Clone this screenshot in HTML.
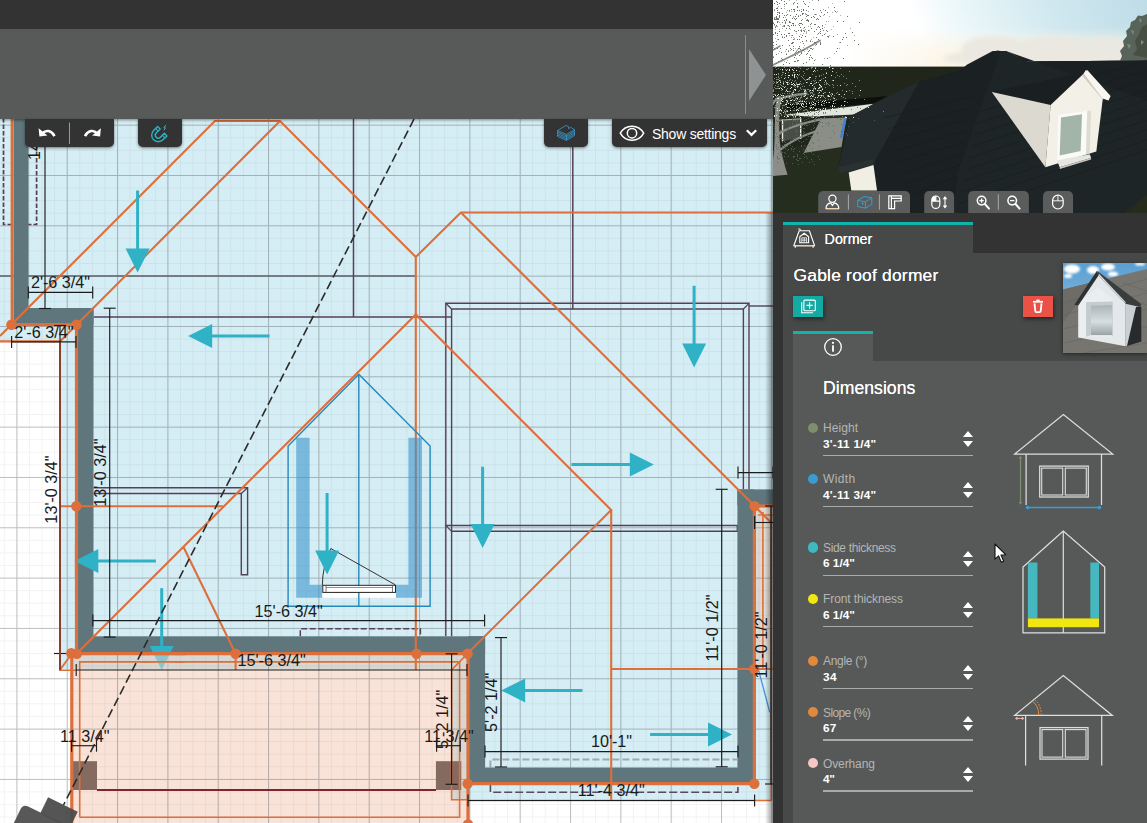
<!DOCTYPE html>
<html lang="en"><head><meta charset="utf-8"><title>Dormer editor</title>
<style>
*{box-sizing:border-box;margin:0;padding:0}
html,body{width:1147px;height:823px;overflow:hidden;background:#fff;
 font-family:"Liberation Sans",sans-serif;}
#app{position:relative;width:1147px;height:823px;overflow:hidden;background:#fff}
#plan{position:absolute;left:0;top:0;width:773px;height:823px}
#topdark{position:absolute;left:0;top:0;width:773px;height:29px;background:#333333}
#topgrey{position:absolute;left:0;top:28.6px;width:773px;height:90px;background:#585a59;
 box-shadow:0 1px 3px rgba(0,0,0,.45)}
#topgrey .vline{position:absolute;left:745px;top:6px;width:1.4px;height:79px;background:#8a8c8b}
#topgrey .tri{position:absolute;left:748.5px;top:20px;width:0;height:0;border-left:17.5px solid #8f9293;
 border-top:26.2px solid transparent;border-bottom:26.2px solid transparent}
.tbtn{position:absolute;top:118.6px;height:28px;background:#333333;border-radius:0 0 5px 5px;
 box-shadow:0 1px 3px rgba(0,0,0,.5)}
.tbtn svg{position:absolute;left:0;top:0}
#showset{color:#fff;font-size:14px;letter-spacing:-0.25px}
#showset span{position:absolute;left:40px;top:7.2px;white-space:nowrap;font-weight:400}
#view{position:absolute;left:773px;top:0;width:374px;height:213px;overflow:hidden}
#edge{position:absolute;left:765px;top:213px;width:8px;height:610px;
 background:linear-gradient(to right,rgba(0,0,0,0),rgba(0,0,0,.42))}
#edge2{position:absolute;left:769px;top:118px;width:4px;height:95px;
 background:linear-gradient(to right,rgba(0,0,0,0),rgba(0,0,0,.25))}

#panel{position:absolute;left:773px;top:213px;width:374px;height:610px;background:#333333;color:#fff}
#ptab{position:absolute;left:10px;top:9.2px;width:190px;height:31px;background:#474948;border-top:3.6px solid #10b4ad}
#ptab svg{position:absolute;left:9px;top:2.5px}
#ptab span{position:absolute;left:41.6px;top:6.2px;font-size:14.3px;white-space:nowrap;text-shadow:0 0 .5px #fff}
#pbody{position:absolute;left:10px;top:39.6px;width:364px;height:571px;background:#474948}
#ptitle{position:absolute;left:10.500px;top:12.200px;font-size:17.4px;letter-spacing:0.23px;white-space:nowrap;text-shadow:0 0 .5px #fff}
.sbtn{position:absolute;top:43px;width:30px;height:21px;box-shadow:1px 2px 4px rgba(0,0,0,.5)}
.sbtn svg{position:absolute;left:0;top:0}
#thumb{position:absolute;left:280px;top:10.3px;width:84px;height:90px;box-shadow:0 1px 4px rgba(0,0,0,.5);overflow:hidden}
#itab{position:absolute;left:10px;top:78.3px;width:80px;height:31px;background:#575958;border-top:3.2px solid #10b4ad}
#itab svg{position:absolute;left:30px;top:3.5px}
#ibody{position:absolute;left:10px;top:108.4px;width:354px;height:464px;background:#575958}
#ibody h3{position:absolute;left:30px;top:16.800px;font-size:17.6px;font-weight:400;letter-spacing:0.04px;white-space:nowrap;text-shadow:0 0 .5px #fff}
.fld{position:absolute;left:0;width:190px;height:40px}
.fld i{position:absolute;left:14.800px;top:7.500px;width:10.400px;height:10.400px;border-radius:50%}
.fld label{position:absolute;left:30px;top:6px;font-size:12px;color:#b4b5b4;white-space:nowrap;letter-spacing:0.05px}
.fld b{position:absolute;left:30px;top:21.5px;font-size:11.8px;font-weight:700;color:#fff;white-space:nowrap;letter-spacing:-0.1px}
.fld u{position:absolute;left:30px;top:39.800px;width:150px;height:1.2px;background:#a9abaa}
.fld s{position:absolute;left:169.500px;width:0;height:0;border-left:5.400px solid transparent;border-right:5.400px solid transparent}
.fld s.up{top:16.100px;border-bottom:6.500px solid #fff}
.fld s.dn{top:25.800px;border-top:6.500px solid #fff}
#diag{position:absolute;left:200px;top:30px}
#cursor{position:absolute;left:994px;top:543px}
</style></head><body><div id="app">
<div id="plan"><svg width="773" height="823" viewBox="0 0 773 823" style="display:block">
<defs>
<pattern id="gmin" x="16.4" y="24" width="12.58" height="12.58" patternUnits="userSpaceOnUse">
<path d="M0.5 0 V12.58 M0 0.5 H12.58" stroke="rgba(70,80,80,0.065)" stroke-width="1" fill="none"/></pattern>
<pattern id="gmaj" x="16.4" y="24" width="50.33" height="50.33" patternUnits="userSpaceOnUse">
<path d="M0.5 0 V50.33 M0 0.5 H50.33" stroke="rgba(60,66,70,0.30)" stroke-width="1.1" fill="none"/></pattern>
</defs>
<rect x="0" y="0" width="773" height="823" fill="#ffffff" />
<rect x="0" y="110" width="773" height="713" fill="#d5edf4" />
<polygon points="0,341.5 60,341.5 60,670.3 70.5,670.3 70.5,823 0,823" fill="#ffffff" />
<rect x="468" y="800.5" width="305" height="23" fill="#ffffff" />
<rect x="70.5" y="654" width="397.5" height="169" fill="#f9e2d7" />
<rect x="756" y="506" width="17" height="163" fill="#dcd9d2" />
<rect x="73.4" y="655" width="394.6" height="15" fill="#d9d7d1" />
<rect x="451.6" y="655" width="16.4" height="145" fill="#d9d7d1" />
<rect x="60" y="325" width="16" height="17" fill="#d5edf4" />
<rect x="0" y="110" width="773" height="713" fill="url(#gmin)" />
<rect x="0" y="110" width="773" height="713" fill="url(#gmaj)" />
<line x1="0" y1="276" x2="416" y2="276" stroke="#5d6168" stroke-width="1.3" />
<line x1="93.5" y1="317" x2="451.6" y2="317" stroke="#563f57" stroke-width="1.5" />
<line x1="353.5" y1="118" x2="353.5" y2="317" stroke="#563f57" stroke-width="1.5" />
<line x1="572.8" y1="118" x2="572.8" y2="309" stroke="#563f57" stroke-width="1.5" />
<polyline points="445.8,636.3 445.8,303.3 749,303.3 749,489.3" fill="none" stroke="#563f57" stroke-width="1.4" />
<polyline points="451.6,636.3 451.6,309 743.4,309 743.4,489.3" fill="none" stroke="#563f57" stroke-width="1.4" />
<line x1="445.8" y1="303.3" x2="451.6" y2="309" stroke="#563f57" stroke-width="1.2" />
<line x1="749" y1="303.3" x2="743.4" y2="309" stroke="#563f57" stroke-width="1.2" />
<line x1="749" y1="306" x2="773" y2="306" stroke="#563f57" stroke-width="1.4" />
<polyline points="445.8,525.5 737.3,525.5 737.3,531.3 451.6,531.3" fill="none" stroke="#563f57" stroke-width="1.4" />
<line x1="445.8" y1="525.5" x2="451.6" y2="531.3" stroke="#563f57" stroke-width="1.2" />
<polyline points="93.5,487.7 247.6,487.7 247.6,574.8 241.3,574.8 241.3,493.5 93.5,493.5" fill="none" stroke="#563f57" stroke-width="1.4" />
<line x1="241.3" y1="493.5" x2="247.6" y2="487.7" stroke="#563f57" stroke-width="1.2" />
<polyline points="3.5,118 3.5,224.5 36.6,224.5 36.6,118" fill="none" stroke="#563f57" stroke-width="1.7" stroke-dasharray="4.5 2"/>
<polyline points="300.3,636.3 300.3,628.7 420.4,628.7 420.4,636.3" fill="none" stroke="#563f57" stroke-width="1.5" stroke-dasharray="6 2.500"/>
<polyline points="490.4,784 490.4,792.2 737.9,792.2 737.9,784" fill="none" stroke="#5b4a60" stroke-width="1.6" stroke-dasharray="8 3"/>
<polyline points="490.4,767.5 490.4,759.5 737,759.5" fill="none" stroke="#a3a9ab" stroke-width="2" stroke-dasharray="7 3"/>
<rect x="14" y="110" width="14.6" height="214" fill="#5f767d" />
<rect x="14" y="308" width="79.5" height="16.5" fill="#5f767d" />
<rect x="77.6" y="308" width="15.9" height="345" fill="#5f767d" />
<rect x="77.6" y="636.3" width="407.5" height="16.2" fill="#5f767d" />
<rect x="468.2" y="636.3" width="16.9" height="147" fill="#5f767d" />
<rect x="468.2" y="767.5" width="285.7" height="15.8" fill="#5f767d" />
<rect x="737.4" y="489.4" width="16.5" height="294" fill="#5f767d" />
<rect x="737.4" y="489.4" width="36" height="16.2" fill="#5f767d" />
<rect x="72.7" y="761.2" width="24.3" height="28.8" fill="#846a5f" />
<rect x="435.9" y="761.2" width="25.4" height="28.8" fill="#846a5f" />
<line x1="97" y1="790" x2="436" y2="790" stroke="#7b2631" stroke-width="2.2" />
<polyline points="79.7,817.3 79.7,661.9 459.6,661.9 459.6,817.3 79.7,817.3" fill="none" stroke="#dc6f3b" stroke-width="1.6" />
<polyline points="467.5,653.6 451.6,670 451.6,799.7 468,799.7" fill="none" stroke="#dc6f3b" stroke-width="1.6" />
<line x1="71.8" y1="653" x2="71.8" y2="823" stroke="#dc6f3b" stroke-width="3.2" />
<line x1="468" y1="653" x2="468" y2="823" stroke="#dc6f3b" stroke-width="3.2" />
<line x1="12.2" y1="110" x2="12.2" y2="325" stroke="#dc6f3b" stroke-width="3.2" />
<line x1="11" y1="324.7" x2="77" y2="324.7" stroke="#dc6f3b" stroke-width="3.2" />
<line x1="76.5" y1="324" x2="76.5" y2="654" stroke="#dc6f3b" stroke-width="3.2" />
<line x1="73" y1="653.6" x2="468" y2="653.6" stroke="#dc6f3b" stroke-width="3.2" />
<line x1="468" y1="783.7" x2="754" y2="783.7" stroke="#dc6f3b" stroke-width="3.2" />
<line x1="754.4" y1="506" x2="754.4" y2="784" stroke="#dc6f3b" stroke-width="3.2" />
<line x1="754" y1="506" x2="773" y2="506" stroke="#dc6f3b" stroke-width="3.2" />
<polyline points="0,336 11.2,324.8 214.9,121 280,121 415.8,257" fill="none" stroke="#dc6f3b" stroke-width="2.1" />
<polyline points="280,121 76.6,324.8 60,341.4 0,341.4" fill="none" stroke="#dc6f3b" stroke-width="2.1" />
<polyline points="415.8,653 415.8,257 460.9,212.5 773,212.5" fill="none" stroke="#dc6f3b" stroke-width="2.1" />
<line x1="460.9" y1="212.5" x2="754.6" y2="506.1" stroke="#dc6f3b" stroke-width="2.1" />
<line x1="754.6" y1="506.1" x2="772" y2="523.5" stroke="#dc6f3b" stroke-width="2.1" />
<polyline points="77,653.3 415.8,314.5 611.2,510 467.5,653.6" fill="none" stroke="#dc6f3b" stroke-width="2.1" />
<line x1="60" y1="506.2" x2="222.9" y2="506.2" stroke="#dc6f3b" stroke-width="2.1" />
<line x1="183.6" y1="547.3" x2="235.6" y2="653.8" stroke="#dc6f3b" stroke-width="2.1" />
<line x1="235.6" y1="653.8" x2="235.6" y2="670" stroke="#dc6f3b" stroke-width="2.1" />
<line x1="415.8" y1="653.8" x2="415.8" y2="670" stroke="#dc6f3b" stroke-width="2.1" />
<line x1="611.2" y1="510" x2="611.2" y2="800.5" stroke="#dc6f3b" stroke-width="2.1" />
<line x1="611.2" y1="669" x2="773" y2="669" stroke="#dc6f3b" stroke-width="2.1" />
<line x1="468" y1="800.5" x2="771" y2="800.5" stroke="#dc6f3b" stroke-width="1.5" />
<line x1="762.9" y1="512" x2="762.9" y2="669" stroke="#dc6f3b" stroke-width="1.6" />
<line x1="771.3" y1="506" x2="771.3" y2="800.5" stroke="#dc6f3b" stroke-width="1.6" />
<line x1="758" y1="515" x2="773" y2="515" stroke="#dc6f3b" stroke-width="1.4" />
<line x1="60" y1="341.4" x2="60" y2="670" stroke="#8a4028" stroke-width="2" />
<line x1="59.4" y1="670.6" x2="72" y2="653.5" stroke="#dc6f3b" stroke-width="1.8" />
<line x1="59.4" y1="670.3" x2="77" y2="670.3" stroke="#dc6f3b" stroke-width="1.4" />
<line x1="758.8" y1="670.8" x2="769.8" y2="712.3" stroke="#4a90d9" stroke-width="1.3" />
<path d="M296.200 437.800 H309.600 V584.800 H322.300 V597.700 H296.200 Z M422 437.800 H408.400 V584.800 H396 V597.700 H422 Z" fill="rgba(60,150,205,0.60)"/>
<rect x="322.3" y="584.8" width="73.7" height="12.9" fill="#ffffff" />
<polyline points="288.1,606.3 288.1,446 358.8,374.3 430.1,446 430.1,606.3 288.1,606.3" fill="none" stroke="#2389bd" stroke-width="1.4" />
<line x1="358.8" y1="374.3" x2="358.8" y2="606.3" stroke="#2389bd" stroke-width="1.4" />
<rect x="322.800" y="585.300" width="72.700" height="7.100" fill="#fff" stroke="#222" stroke-width="1"/>
<line x1="326" y1="587.5" x2="392.5" y2="587.5" stroke="#777" stroke-width="0.8" />
<line x1="326" y1="585.3" x2="326" y2="592.4" stroke="#555" stroke-width="0.8" />
<line x1="392.5" y1="585.3" x2="392.5" y2="592.4" stroke="#555" stroke-width="0.8" />
<path d="M395.300 584.800 L330.800 548.500 Q322.500 566 322.300 585.300" fill="none" stroke="#333" stroke-width="1"/>
<line x1="137.6" y1="190.5" x2="137.6" y2="249.6" stroke="#2fb2c6" stroke-width="3" /><polygon points="137.6,272.6 125.6,248.6 149.6,248.6" fill="#2fb2c6" />
<line x1="269.6" y1="336.1" x2="211.2" y2="336.1" stroke="#2fb2c6" stroke-width="3" /><polygon points="188.2,336.1 212.2,324.1 212.2,348.1" fill="#2fb2c6" />
<line x1="694.1" y1="285.8" x2="694.1" y2="344.6" stroke="#2fb2c6" stroke-width="3" /><polygon points="694.1,367.6 682.1,343.6 706.1,343.6" fill="#2fb2c6" />
<line x1="571.5" y1="464.4" x2="630.8" y2="464.4" stroke="#2fb2c6" stroke-width="3" /><polygon points="653.8,464.4 629.8,476.4 629.8,452.4" fill="#2fb2c6" />
<line x1="482.6" y1="466.7" x2="482.6" y2="525" stroke="#2fb2c6" stroke-width="3" /><polygon points="482.6,548 470.6,524 494.6,524" fill="#2fb2c6" />
<line x1="327.1" y1="493" x2="327.1" y2="551.4" stroke="#2fb2c6" stroke-width="3" /><polygon points="327.1,574.4 315.1,550.4 339.1,550.4" fill="#2fb2c6" />
<line x1="155.9" y1="561" x2="97.3" y2="561" stroke="#2fb2c6" stroke-width="3" /><polygon points="74.3,561 98.3,549 98.3,573" fill="#2fb2c6" />
<line x1="76.5" y1="545" x2="76.5" y2="577" stroke="#dc6f3b" stroke-width="3.2" />
<line x1="161.7" y1="588.2" x2="161.7" y2="647" stroke="#2fb2c6" stroke-width="3" /><polygon points="161.7,670 149.7,646 173.7,646" fill="#2fb2c6" />
<line x1="582.5" y1="690.4" x2="524.2" y2="690.4" stroke="#2fb2c6" stroke-width="3" /><polygon points="501.2,690.4 525.2,678.4 525.2,702.4" fill="#2fb2c6" />
<line x1="650.1" y1="734.4" x2="709" y2="734.4" stroke="#2fb2c6" stroke-width="3" /><polygon points="732,734.4 708,746.4 708,722.4" fill="#2fb2c6" />
<rect x="149" y="655.2" width="26" height="14.8" fill="rgba(217,215,209,0.55)" />
<line x1="140" y1="653.6" x2="185" y2="653.6" stroke="#dc6f3b" stroke-width="3.2" />
<line x1="140" y1="661.9" x2="185" y2="661.9" stroke="#dc6f3b" stroke-width="1.6" />
<circle cx="11.4" cy="324.8" r="5.2" fill="#dc6f3b"/>
<circle cx="76.6" cy="324.8" r="5.2" fill="#dc6f3b"/>
<circle cx="76.3" cy="506.2" r="5.2" fill="#dc6f3b"/>
<circle cx="71.3" cy="653.3" r="5.2" fill="#dc6f3b"/>
<circle cx="76.8" cy="653.9" r="5.2" fill="#dc6f3b"/>
<circle cx="235.6" cy="653.7" r="5.2" fill="#dc6f3b"/>
<circle cx="416.5" cy="653.7" r="5.2" fill="#dc6f3b"/>
<circle cx="467.6" cy="653.7" r="5.2" fill="#dc6f3b"/>
<circle cx="467.6" cy="783.8" r="5.2" fill="#dc6f3b"/>
<circle cx="754.3" cy="783.8" r="5.2" fill="#dc6f3b"/>
<circle cx="754.3" cy="669" r="5.2" fill="#dc6f3b"/>
<circle cx="754.6" cy="506.1" r="5.2" fill="#dc6f3b"/>
<circle cx="468" cy="824.5" r="5.2" fill="#dc6f3b"/>
<line x1="45" y1="60" x2="45" y2="308.5" stroke="#1c1c1c" stroke-width="1.15" /><line x1="39" y1="60" x2="51" y2="60" stroke="#1c1c1c" stroke-width="1.15" /><line x1="39" y1="308.5" x2="51" y2="308.5" stroke="#1c1c1c" stroke-width="1.15" />
<text transform="translate(40 160) rotate(-90)" font-size="16" fill="#1a1a1a" font-family="Liberation Sans, sans-serif">14'-4 1/2"</text>
<line x1="28.3" y1="292.4" x2="92.7" y2="292.4" stroke="#1c1c1c" stroke-width="1.15" /><line x1="28.3" y1="286.4" x2="28.3" y2="298.4" stroke="#1c1c1c" stroke-width="1.15" /><line x1="92.7" y1="286.4" x2="92.7" y2="298.4" stroke="#1c1c1c" stroke-width="1.15" /><text x="60.5" y="287.9" font-size="16.2" text-anchor="middle" fill="#1a1a1a" font-family="Liberation Sans, sans-serif">2'-6 3/4"</text>
<line x1="11.6" y1="341.9" x2="76" y2="341.9" stroke="#1c1c1c" stroke-width="1.15" /><line x1="11.6" y1="335.9" x2="11.6" y2="347.9" stroke="#1c1c1c" stroke-width="1.15" /><line x1="76" y1="335.9" x2="76" y2="347.9" stroke="#1c1c1c" stroke-width="1.15" /><text x="43.8" y="338" font-size="16.2" text-anchor="middle" fill="#1a1a1a" font-family="Liberation Sans, sans-serif">2'-6 3/4"</text>
<line x1="109.7" y1="308.2" x2="109.7" y2="637.1" stroke="#1c1c1c" stroke-width="1.15" /><line x1="103.7" y1="308.2" x2="115.7" y2="308.2" stroke="#1c1c1c" stroke-width="1.15" /><line x1="103.7" y1="637.1" x2="115.7" y2="637.1" stroke="#1c1c1c" stroke-width="1.15" /><text transform="translate(106 472.65) rotate(-90)" font-size="16.2" text-anchor="middle" fill="#1a1a1a" font-family="Liberation Sans, sans-serif">13'-0 3/4"</text>
<line x1="60" y1="325.5" x2="60" y2="653.5" stroke="#1c1c1c" stroke-width="1.15" /><line x1="54" y1="325.5" x2="66" y2="325.5" stroke="#1c1c1c" stroke-width="1.15" /><line x1="54" y1="653.5" x2="66" y2="653.5" stroke="#1c1c1c" stroke-width="1.15" /><text transform="translate(56.5 489.5) rotate(-90)" font-size="16.2" text-anchor="middle" fill="#1a1a1a" font-family="Liberation Sans, sans-serif">13'-0 3/4"</text>
<line x1="60" y1="342.5" x2="60" y2="670" stroke="#8a4028" stroke-width="2" />
<line x1="92.8" y1="620.6" x2="484.6" y2="620.6" stroke="#1c1c1c" stroke-width="1.15" /><line x1="92.8" y1="614.6" x2="92.8" y2="626.6" stroke="#1c1c1c" stroke-width="1.15" /><line x1="484.6" y1="614.6" x2="484.6" y2="626.6" stroke="#1c1c1c" stroke-width="1.15" /><text x="288.7" y="616.7" font-size="16.2" text-anchor="middle" fill="#1a1a1a" font-family="Liberation Sans, sans-serif">15'-6 3/4"</text>
<line x1="76.2" y1="670" x2="467" y2="670" stroke="#1c1c1c" stroke-width="1.15" /><line x1="76.2" y1="664" x2="76.2" y2="676" stroke="#1c1c1c" stroke-width="1.15" /><line x1="467" y1="664" x2="467" y2="676" stroke="#1c1c1c" stroke-width="1.15" /><text x="271.6" y="665.5" font-size="16.2" text-anchor="middle" fill="#1a1a1a" font-family="Liberation Sans, sans-serif">15'-6 3/4"</text>
<line x1="71.6" y1="745.7" x2="96.5" y2="745.7" stroke="#1c1c1c" stroke-width="1.15" /><line x1="71.6" y1="739.7" x2="71.6" y2="751.7" stroke="#1c1c1c" stroke-width="1.15" /><line x1="96.5" y1="739.7" x2="96.5" y2="751.7" stroke="#1c1c1c" stroke-width="1.15" /><text x="84.8" y="741.7" font-size="16.2" text-anchor="middle" fill="#1a1a1a" font-family="Liberation Sans, sans-serif">11 3/4"</text>
<line x1="436.6" y1="745.7" x2="460.2" y2="745.7" stroke="#1c1c1c" stroke-width="1.15" /><line x1="436.6" y1="739.7" x2="436.6" y2="751.7" stroke="#1c1c1c" stroke-width="1.15" /><line x1="460.2" y1="739.7" x2="460.2" y2="751.7" stroke="#1c1c1c" stroke-width="1.15" /><text x="449" y="741.7" font-size="16.2" text-anchor="middle" fill="#1a1a1a" font-family="Liberation Sans, sans-serif">11 3/4"</text>
<line x1="451.6" y1="653.8" x2="451.6" y2="784.3" stroke="#1c1c1c" stroke-width="1.15" /><line x1="445.6" y1="653.8" x2="457.6" y2="653.8" stroke="#1c1c1c" stroke-width="1.15" /><line x1="445.6" y1="784.3" x2="457.6" y2="784.3" stroke="#1c1c1c" stroke-width="1.15" /><text transform="translate(448.3 719.4) rotate(-90)" font-size="16.2" text-anchor="middle" fill="#1a1a1a" font-family="Liberation Sans, sans-serif">5'-2 1/4"</text>
<line x1="501" y1="637.6" x2="501" y2="767" stroke="#1c1c1c" stroke-width="1.15" /><line x1="495" y1="637.6" x2="507" y2="637.6" stroke="#1c1c1c" stroke-width="1.15" /><line x1="495" y1="767" x2="507" y2="767" stroke="#1c1c1c" stroke-width="1.15" /><text transform="translate(497 702.3) rotate(-90)" font-size="16.2" text-anchor="middle" fill="#1a1a1a" font-family="Liberation Sans, sans-serif">5'-2 1/4"</text>
<line x1="485" y1="751.6" x2="738" y2="751.6" stroke="#1c1c1c" stroke-width="1.15" /><line x1="485" y1="745.6" x2="485" y2="757.6" stroke="#1c1c1c" stroke-width="1.15" /><line x1="738" y1="745.6" x2="738" y2="757.6" stroke="#1c1c1c" stroke-width="1.15" /><text x="611.5" y="746.7" font-size="16.2" text-anchor="middle" fill="#1a1a1a" font-family="Liberation Sans, sans-serif">10'-1"</text>
<line x1="468" y1="800.5" x2="754.6" y2="800.5" stroke="#1c1c1c" stroke-width="1.15" /><line x1="468" y1="794.5" x2="468" y2="806.5" stroke="#1c1c1c" stroke-width="1.15" /><line x1="754.6" y1="794.5" x2="754.6" y2="806.5" stroke="#1c1c1c" stroke-width="1.15" /><text x="611.3" y="796.2" font-size="16.2" text-anchor="middle" fill="#1a1a1a" font-family="Liberation Sans, sans-serif">11'-4 3/4"</text>
<line x1="721.7" y1="489.3" x2="721.7" y2="766.8" stroke="#1c1c1c" stroke-width="1.15" /><line x1="715.7" y1="489.3" x2="727.7" y2="489.3" stroke="#1c1c1c" stroke-width="1.15" /><line x1="715.7" y1="766.8" x2="727.7" y2="766.8" stroke="#1c1c1c" stroke-width="1.15" /><text transform="translate(718.3 628.05) rotate(-90)" font-size="16.2" text-anchor="middle" fill="#1a1a1a" font-family="Liberation Sans, sans-serif">11'-0 1/2"</text>
<line x1="771" y1="506" x2="771" y2="784" stroke="#1c1c1c" stroke-width="1.15" /><line x1="765" y1="506" x2="777" y2="506" stroke="#1c1c1c" stroke-width="1.15" /><line x1="765" y1="784" x2="777" y2="784" stroke="#1c1c1c" stroke-width="1.15" /><text transform="translate(767 645) rotate(-90)" font-size="16.2" text-anchor="middle" fill="#1a1a1a" font-family="Liberation Sans, sans-serif">11'-0 1/2"</text>
<line x1="738" y1="472.6" x2="773" y2="472.6" stroke="#1c1c1c" stroke-width="1.15" /><line x1="738" y1="466.6" x2="738" y2="478.6" stroke="#1c1c1c" stroke-width="1.15" /><line x1="773" y1="466.6" x2="773" y2="478.6" stroke="#1c1c1c" stroke-width="1.15" />
<line x1="754.6" y1="522.5" x2="773" y2="522.5" stroke="#1c1c1c" stroke-width="1.1" />
<line x1="754.6" y1="516" x2="754.6" y2="529" stroke="#1c1c1c" stroke-width="1.3" />
<line x1="414" y1="119" x2="63.5" y2="805" stroke="#2b2b2b" stroke-width="1.6" stroke-dasharray="9 4"/>
<g transform="translate(37.600 824.400) rotate(25.900)"><rect x="-22" y="-12" width="66" height="44" rx="5" fill="#4e4e4e" opacity="0.94"/><rect x="-2.400" y="-28.900" width="33" height="18" fill="#4a4a4a" opacity="0.94"/></g>
</svg></div>
<div id="edge"></div><div id="edge2"></div>
<div id="topgrey"><div class="vline"></div><div class="tri"></div></div>
<div id="topdark"></div>
<div class="tbtn" style="left:25px;width:88.5px">
<svg width="89" height="28" viewBox="0 0 89 28">
<line x1="44.5" y1="3.5" x2="44.5" y2="25" stroke="#9a9a9a" stroke-width="1"/>
<g fill="none" stroke="#fff" stroke-width="2.6" stroke-linecap="butt">
<path d="M17.5 14.2 C21 10.6 26.5 11.2 29.5 17.2"/>
<path d="M72 14.2 C68.500 10.6 63 11.2 60 17.2"/>
</g>
<path d="M13.600 9.200 L14.400 17.600 L22.400 16.400 Z" fill="#fff"/>
<path d="M75.900 9.200 L75.100 17.600 L67.100 16.400 Z" fill="#fff"/>
</svg></div>
<div class="tbtn" style="left:138.3px;width:43.5px">
<svg width="44" height="28" viewBox="0 0 44 28">
<g fill="none" stroke="#2bb3c6" stroke-width="1.400" stroke-linejoin="round" stroke-linecap="round">
<g transform="translate(20.300 16.200) rotate(45)">
<path d="M-6.600 -5.600 V0 A6.600 6.600 0 0 0 6.600 0 V-5.600 H3 V0 A3 3 0 0 1 -3 0 V-5.600 Z"/>
<path d="M-6.600 -2.800 H-3 M3 -2.800 H6.600" stroke-width="1.100"/>
</g>
<path d="M27.800 6.200 L25.800 8.800 L27.600 8.800 L26 11" stroke-width="1"/>
</g></svg></div>
<div class="tbtn" style="left:544.2px;width:43.7px">
<svg width="44" height="28" viewBox="0 0 44 28">
<g fill="none" stroke="#3a9fd6" stroke-width="0.75" stroke-linejoin="round">
<path d="M13.500 11.500 L22 6.500 L24.500 7.600 L24.500 9.600 L26.800 8.400 L30.500 10.600 L30.500 16.600 L22.500 21.400 L13.500 17.500 Z"/>
<path d="M13.500 11.500 L22.500 15.400 L30.500 10.600 M22.500 15.400 L22.500 21.400"/>
<path d="M13.500 13 L22.500 16.900 L30.500 12.100 M13.500 14.500 L22.500 18.400 L30.500 13.600 M13.500 16 L22.500 19.900 L30.500 15.100"/>
</g></svg></div>
<div class="tbtn" id="showset" style="left:612px;width:154.8px">
<svg width="155" height="28" viewBox="0 0 155 28">
<g fill="none" stroke="#fff" stroke-width="1.5">
<path d="M8.300 14.200 C13.500 4.800 26.500 4.800 31.700 14.200 C26.500 23.600 13.500 23.600 8.300 14.200 Z"/>
<circle cx="20" cy="14.200" r="4.700"/>
</g>
<path d="M134.800 11.200 L139.500 15.900 L144.200 11.200" fill="none" stroke="#fff" stroke-width="2.200"/>
</svg><span>Show settings</span></div>
<div id="view"><svg width="374" height="213" viewBox="0 0 374 213" style="display:block">
<defs>
<linearGradient id="sky" gradientUnits="userSpaceOnUse" x1="60" y1="90" x2="374" y2="-40"><stop offset="0" stop-color="#ffffff"/><stop offset="0.3" stop-color="#ffffff"/><stop offset="0.45" stop-color="#e9f6f9"/><stop offset="0.7" stop-color="#cfe7ef"/><stop offset="1" stop-color="#bcdae5"/></linearGradient>
<linearGradient id="haze" x1="0" y1="0" x2="0" y2="1"><stop offset="0" stop-color="#fbf6e8" stop-opacity="0"/><stop offset="0.4" stop-color="#fbf6e8" stop-opacity="0"/><stop offset="0.75" stop-color="#fbf6e8" stop-opacity="0.85"/><stop offset="1" stop-color="#fbf5e6" stop-opacity="1"/></linearGradient>
<linearGradient id="roofg" x1="0" y1="0" x2="1" y2="1"><stop offset="0" stop-color="#1b2022"/><stop offset="1" stop-color="#202729"/></linearGradient>
<linearGradient id="wl" x1="0" y1="0" x2="1" y2="0"><stop offset="0" stop-color="#fff" stop-opacity="1"/><stop offset="0.2" stop-color="#fff" stop-opacity="1"/><stop offset="0.45" stop-color="#fff" stop-opacity="0"/></linearGradient>
<filter id="bl"><feGaussianBlur stdDeviation="2.500"/></filter>
<filter id="bl1"><feGaussianBlur stdDeviation="0.600"/></filter>
</defs>
<rect x="0" y="0" width="374" height="70" fill="url(#sky)"/>
<rect x="0" y="0" width="374" height="68" fill="url(#haze)"/>
<g filter="url(#bl)" fill="#eae8e0"><ellipse cx="222" cy="49" rx="34" ry="13"/><ellipse cx="283" cy="50" rx="44" ry="14"/><ellipse cx="335" cy="50" rx="28" ry="13"/><ellipse cx="250" cy="58" rx="80" ry="8"/></g>
<rect x="0" y="0" width="374" height="68" fill="url(#wl)"/>
<rect x="0" y="66.600" width="374" height="147" fill="#20271a"/>
<polygon points="0,150 70,140 110,213 0,213" fill="#252d1e" />
<polygon points="0,100 60,96 75,120 0,150" fill="#232a1c" />
<path d="M14 104.500 L40 102 L73 99.800 L115 96 L115 99.500 L99 103.500 L60 107 L14 109.500 Z" fill="#0c0f0b"/>
<polygon points="10.2,115 99,104 100.5,104.5 87.5,114.3 38,116.6" fill="#e3e5df" />
<polygon points="48.1,118.6 73.6,117.6 68.5,147 30.6,152.9" fill="#8b8d87" />
<polygon points="71.2,118.5 73.8,118.3 69.3,137.8 66.8,138" fill="#3d82d2" />
<polygon points="9.5,120 27.7,119.2 27.7,138 9.5,141.2" fill="#50534e" opacity="0.850"/>
<g stroke="#ecece8" stroke-width="1.400" fill="none"><path d="M9.500 119.400 V141.200 M27.700 118.600 V139"/></g>
<path d="M3 120.500 L27.700 118.800" stroke="#b9bbb5" stroke-width="1" fill="none"/>
<g filter="url(#bl1)"><path d="M374 14 L369 16 L365 15.500 L362 20 L358 22 L357 27 L353 31 L354 36 L350 41 L351 46 L347 51 L349 56 L347 60.500 L374 60.500 Z" fill="#59645a"/><path d="M374 24 L369 27 L366 34 L362 41 L364 49 L360 55 L374 58 Z" fill="#465043"/><path d="M366 18 l3 2 l-2 3 z M358 30 l3 1 l-1 4 z M354 44 l4 1 l-2 4 z M368 40 l3 2 l-3 3 z" fill="#7e8a80"/></g>
<polygon points="374,60.6 254,61.4 232.6,51 219.7,51 193.8,64.7 187,70.5 141,83.6 100.5,104.5 74.4,117.5 65.3,167.1 66.6,173.7 100.5,163.2 104,213 374,213" fill="#1d2325" />
<polygon points="146.3,81.5 114.4,96.3 77.2,116.5 65.5,168.6 66.6,173.5 100.6,165.4 102.7,160.1" fill="#242b2d" />
<polygon points="146.3,81.5 187,70.5 224,50.6 228,51 205.8,112.3 184.6,173 180,213 104,213 100.6,165.4 102.7,160.1" fill="#1b2022" />
<polygon points="228,51 233.2,51 252.8,61.4 374,60.6 374,213 180,213 184.6,173 205.8,112.3" fill="#1e2527" />
<polygon points="233.2,51 252.8,61.4 374,60.6 374,100 300,75" fill="#1b2123" />
<g stroke="#151a1b" stroke-width="0.800" opacity="0.550">
<line x1="206" y1="112" x2="374" y2="60"/>
<line x1="203.4" y1="123.5" x2="374" y2="70"/>
<line x1="200.8" y1="135" x2="374" y2="80"/>
<line x1="198.2" y1="146.5" x2="374" y2="90"/>
<line x1="195.6" y1="158" x2="374" y2="100"/>
<line x1="193" y1="169.5" x2="374" y2="110"/>
<line x1="190.4" y1="181" x2="374" y2="120"/>
<line x1="187.8" y1="192.5" x2="374" y2="130"/>
<line x1="185.2" y1="204" x2="374" y2="140"/>
<line x1="182.6" y1="215.5" x2="374" y2="150"/>
</g>
<g stroke="#141819" stroke-width="0.700" opacity="0.550">
<line x1="110" y1="118" x2="200" y2="96"/>
<line x1="114" y1="129" x2="197.8" y2="107.5"/>
<line x1="118" y1="140" x2="195.6" y2="119"/>
<line x1="122" y1="151" x2="193.4" y2="130.5"/>
<line x1="126" y1="162" x2="191.2" y2="142"/>
<line x1="130" y1="173" x2="189" y2="153.5"/>
<line x1="134" y1="184" x2="186.8" y2="165"/>
<line x1="138" y1="195" x2="184.6" y2="176.5"/>
<line x1="142" y1="206" x2="182.4" y2="188"/>
</g>
<polygon points="351.5,213 374,194.7 374,213" fill="#252c1c" />
<polygon points="65.3,167.1 66.6,173.7 100.5,164.2 100.2,159" fill="#2a3133" />
<polygon points="75.7,172.4 100.5,165 104,190.6 78.3,190.6" fill="#f1efe3" />
<polygon points="218.8,92 312.4,71.9 277.6,105" fill="#1a1f21" />
<polygon points="218.8,92 277.6,105 272.4,167.2" fill="#dcdad0" />
<polygon points="312.4,71.9 277.6,105 272.4,167.2 323.3,151.6 329.9,98" fill="#f3f1e7" />
<polygon points="312.4,70.6 314.5,70.2 337.6,96 335.5,100.5 329.5,98.5 310.8,73.6" fill="#f7f6f0" />
<polygon points="310.8,73.6 329.5,98.5 330.5,100.5 309.5,76" fill="#cfcdc3" />
<polygon points="285.4,115 314.2,111 312.9,154.2 284.1,160" fill="#fafaf7" />
<polygon points="314.2,111 318,110.5 316.8,153 312.9,154.2" fill="#dedccf" />
<polygon points="288,117.6 309,114.2 307.6,151 286.7,155.5" fill="#a3b4a9" />
<polygon points="284.1,160.7 316.8,154.2 318.1,158 286.7,167.2" fill="#e6e6e1" />
<polygon points="286.7,167.2 318.1,158 318.1,159.5 286.9,169" fill="#c9c9c2" />
<path d="M0 176 L14.600 174.800 C10 160 7 148 6.600 138 C6.200 128 6 120 6.500 112 C7 106 8 102 9.500 98 L4 97 C2.500 104 2 112 2 120 C1.800 135 1.500 150 0 160 Z" fill="#8c8d88"/>
<g stroke="#8c8d88" fill="none" stroke-linecap="round"><path d="M5 134 C16 127 30 123 48 119.400" stroke-width="2.400"/><path d="M7 150 C16 142 28 136 43.700 131" stroke-width="2.200"/><path d="M6 99 C14 96 24 94.500 33.500 93.800" stroke-width="2.400"/><path d="M0 104 C2 100 4 98 7 97" stroke-width="2"/><path d="M0 65 C14 58 32 50 47 40.500" stroke-width="1.800"/><path d="M0 50 L7 46" stroke-width="1.500"/><path d="M20 56 L26 48" stroke-width="1"/></g>
<path d="M4 8h1v1h-1zM1 48h1v1h-1zM38 23h1v1h-1zM81 40h1v1h-1zM4 21h1v1h-1zM25 30h1v1h-1zM47 10h1v1h-1zM46 27h1v1h-1zM22 61h1v1h-1zM70 58h1v1h-1zM9 13h1v1h-1zM43 29h1v1h-1zM2 27h1v1h-1zM2 32h1v1h-1zM30 13h1v1h-1zM16 63h1v1h-1zM47 16h1v1h-1zM33 16h1v1h-1zM31 27h1v1h-1zM50 30h1v1h-1zM35 15h1v1h-1zM35 6h1v1h-1zM1 3h1v1h-1zM13 36h1v1h-1zM22 16h1v1h-1zM30 63h1v1h-1zM5 18h1v1h-1zM16 21h1v1h-1zM41 60h1v1h-1zM42 24h1v1h-1zM20 50h1v1h-1zM63 51h1v1h-1zM12 22h1v1h-1zM61 7h1v1h-1zM24 39h1v1h-1zM18 25h1v1h-1zM26 46h1v1h-1zM45 0h1v1h-1zM24 7h1v1h-1zM30 50h1v1h-1zM54 58h1v1h-1zM16 28h1v1h-1zM43 37h1v1h-1zM35 30h1v1h-1zM54 12h1v1h-1zM0 42h1v1h-1zM5 39h1v1h-1zM26 10h1v1h-1zM31 31h1v1h-1zM22 25h1v1h-1zM17 48h1v1h-1zM42 14h1v1h-1zM44 18h1v1h-1zM54 31h1v1h-1zM21 30h1v1h-1zM55 36h1v1h-1zM49 28h1v1h-1zM5 19h1v1h-1zM18 43h1v1h-1zM11 15h1v1h-1zM67 42h1v1h-1zM28 11h1v1h-1zM21 57h1v1h-1zM22 55h1v1h-1zM26 36h1v1h-1zM18 49h1v1h-1zM3 17h1v1h-1zM11 26h1v1h-1zM10 17h1v1h-1zM35 21h1v1h-1zM19 18h1v1h-1zM16 26h1v1h-1zM33 54h1v1h-1zM57 65h1v1h-1zM13 15h1v1h-1zM11 1h1v1h-1zM29 14h1v1h-1zM17 22h1v1h-1zM28 53h1v1h-1zM19 23h1v1h-1zM12 23h1v1h-1zM11 4h1v1h-1zM28 52h1v1h-1zM3 16h1v1h-1zM64 48h1v1h-1zM19 43h1v1h-1zM0 57h1v1h-1zM15 33h1v1h-1zM22 19h1v1h-1zM9 37h1v1h-1zM16 45h1v1h-1zM27 23h1v1h-1zM25 16h1v1h-1zM4 4h1v1h-1zM33 20h1v1h-1zM47 44h1v1h-1zM20 3h1v1h-1zM0 34h1v1h-1zM28 20h1v1h-1zM21 11h1v1h-1zM30 43h1v1h-1zM25 48h1v1h-1zM33 40h1v1h-1zM1 24h1v1h-1zM38 48h1v1h-1zM6 16h1v1h-1zM10 64h1v1h-1zM21 61h1v1h-1zM45 26h1v1h-1zM20 23h1v1h-1zM47 29h1v1h-1zM4 48h1v1h-1zM34 19h1v1h-1zM36 57h1v1h-1zM3 44h1v1h-1zM71 1h1v1h-1zM6 12h1v1h-1zM35 51h1v1h-1zM11 25h1v1h-1zM85 44h1v1h-1zM33 62h1v1h-1zM3 19h1v1h-1zM29 50h1v1h-1zM6 13h1v1h-1zM26 55h1v1h-1zM54 36h1v1h-1zM0 23h1v1h-1zM37 24h1v1h-1zM23 14h1v1h-1zM28 37h1v1h-1zM8 8h1v1h-1zM36 59h1v1h-1zM34 15h1v1h-1zM8 52h1v1h-1zM43 44h1v1h-1zM28 23h1v1h-1zM27 49h1v1h-1zM13 54h1v1h-1zM60 36h1v1h-1zM6 15h1v1h-1zM21 18h1v1h-1zM30 30h1v1h-1zM29 41h1v1h-1zM30 1h1v1h-1zM24 6h1v1h-1zM13 3h1v1h-1zM20 39h1v1h-1zM9 59h1v1h-1zM19 35h1v1h-1zM30 10h1v1h-1zM72 33h1v1h-1zM29 24h1v1h-1zM3 18h1v1h-1zM73 37h1v1h-1zM3 54h1v1h-1zM39 49h1v1h-1zM28 31h1v1h-1zM27 27h1v1h-1zM49 25h1v1h-1zM41 24h1v1h-1zM45 33h1v1h-1zM36 50h1v1h-1zM21 2h1v1h-1zM42 42h1v1h-1zM0 49h1v1h-1zM4 19h1v1h-1zM13 20h1v1h-1zM13 35h1v1h-1zM3 25h1v1h-1zM13 49h1v1h-1zM26 25h1v1h-1zM20 46h1v1h-1zM32 36h1v1h-1zM51 34h1v1h-1zM70 37h1v1h-1zM9 45h1v1h-1zM26 48h1v1h-1zM1 10h1v1h-1zM25 60h1v1h-1zM8 0h1v1h-1zM23 18h1v1h-1zM41 42h1v1h-1zM8 58h1v1h-1zM6 3h1v1h-1zM35 20h1v1h-1zM21 9h1v1h-1zM0 45h1v1h-1zM16 33h1v1h-1zM45 19h1v1h-1zM64 21h1v1h-1zM62 11h1v1h-1zM37 41h1v1h-1zM18 9h1v1h-1zM19 42h1v1h-1zM13 19h1v1h-1zM20 25h1v1h-1zM29 35h1v1h-1zM32 4h1v1h-1zM26 23h1v1h-1zM37 48h1v1h-1zM4 18h1v1h-1zM49 35h1v1h-1zM45 39h1v1h-1zM48 12h1v1h-1zM15 40h1v1h-1zM4 35h1v1h-1zM13 62h1v1h-1zM23 31h1v1h-1zM14 14h1v1h-1zM33 10h1v1h-1zM2 19h1v1h-1zM1 19h1v1h-1zM38 17h1v1h-1zM4 33h1v1h-1zM16 10h1v1h-1zM74 16h1v1h-1zM11 20h1v1h-1zM86 22h1v1h-1zM5 61h1v1h-1zM8 60h1v1h-1zM40 9h1v1h-1zM37 55h1v1h-1zM47 43h1v1h-1zM38 28h1v1h-1zM4 14h1v1h-1zM4 2h1v1h-1zM1 18h1v1h-1zM9 22h1v1h-1zM16 22h1v1h-1zM20 9h1v1h-1zM28 30h1v1h-1zM41 31h1v1h-1zM6 17h1v1h-1zM43 19h1v1h-1zM33 14h1v1h-1zM34 53h1v1h-1zM24 10h1v1h-1zM25 51h1v1h-1zM24 3h1v1h-1zM7 48h1v1h-1zM4 22h1v1h-1zM41 17h1v1h-1zM3 8h1v1h-1zM52 10h1v1h-1zM4 12h1v1h-1zM2 33h1v1h-1zM15 25h1v1h-1zM47 31h1v1h-1zM8 34h1v1h-1zM15 51h1v1h-1zM53 30h1v1h-1zM26 39h1v1h-1zM4 10h1v1h-1zM17 15h1v1h-1zM40 16h1v1h-1zM47 42h1v1h-1zM3 1h1v1h-1zM24 60h1v1h-1zM11 34h1v1h-1zM6 31h1v1h-1zM51 14h1v1h-1zM30 9h1v1h-1zM20 42h1v1h-1zM13 28h1v1h-1zM11 37h1v1h-1zM70 21h1v1h-1zM38 57h1v1h-1zM27 15h1v1h-1zM31 3h1v1h-1zM49 64h1v1h-1zM39 58h1v1h-1zM47 33h1v1h-1zM3 63h1v1h-1zM29 13h1v1h-1zM69 39h1v1h-1zM79 32h1v1h-1zM34 20h1v1h-1z" fill="#69756a" shape-rendering="crispEdges"/>
<path d="M67 15h1v1h-1zM9 28h1v1h-1zM31 51h1v1h-1zM20 16h1v1h-1zM44 27h1v1h-1zM43 14h1v1h-1zM61 10h1v1h-1zM77 28h1v1h-1zM4 39h1v1h-1zM49 26h1v1h-1zM24 54h1v1h-1zM37 40h1v1h-1zM50 15h1v1h-1zM20 4h1v1h-1zM0 56h1v1h-1zM35 11h1v1h-1zM20 48h1v1h-1zM0 47h1v1h-1zM25 15h1v1h-1zM17 29h1v1h-1zM2 29h1v1h-1zM32 29h1v1h-1zM40 37h1v1h-1zM9 26h1v1h-1zM21 39h1v1h-1zM23 58h1v1h-1zM46 15h1v1h-1zM7 24h1v1h-1zM34 49h1v1h-1zM3 41h1v1h-1zM59 3h1v1h-1zM55 21h1v1h-1zM5 53h1v1h-1zM11 8h1v1h-1zM23 0h1v1h-1zM13 12h1v1h-1zM29 19h1v1h-1zM5 21h1v1h-1zM74 45h1v1h-1zM21 10h1v1h-1zM52 33h1v1h-1zM66 48h1v1h-1zM22 31h1v1h-1zM27 34h1v1h-1zM17 50h1v1h-1zM6 29h1v1h-1zM13 53h1v1h-1zM12 30h1v1h-1zM64 11h1v1h-1zM32 13h1v1h-1zM18 37h1v1h-1zM14 10h1v1h-1zM2 26h1v1h-1zM1 9h1v1h-1zM2 38h1v1h-1zM66 42h1v1h-1zM58 29h1v1h-1zM36 30h1v1h-1zM27 30h1v1h-1zM33 31h1v1h-1zM28 9h1v1h-1zM23 33h1v1h-1zM6 51h1v1h-1zM50 9h1v1h-1zM6 22h1v1h-1zM81 35h1v1h-1zM37 26h1v1h-1zM4 26h1v1h-1zM5 6h1v1h-1zM18 11h1v1h-1zM53 21h1v1h-1zM61 53h1v1h-1zM11 6h1v1h-1zM11 61h1v1h-1zM42 59h1v1h-1zM15 50h1v1h-1zM39 0h1v1h-1zM0 22h1v1h-1zM56 57h1v1h-1zM31 30h1v1h-1zM32 18h1v1h-1zM12 51h1v1h-1zM33 33h1v1h-1zM20 17h1v1h-1zM18 35h1v1h-1zM12 17h1v1h-1zM41 14h1v1h-1zM64 34h1v1h-1zM14 25h1v1h-1zM51 58h1v1h-1zM1 17h1v1h-1zM51 27h1v1h-1zM59 12h1v1h-1zM33 32h1v1h-1zM10 26h1v1h-1zM56 16h1v1h-1zM35 26h1v1h-1zM28 29h1v1h-1zM21 38h1v1h-1zM16 35h1v1h-1zM33 41h1v1h-1zM40 48h1v1h-1zM1 25h1v1h-1zM4 7h1v1h-1zM27 42h1v1h-1zM16 11h1v1h-1zM22 48h1v1h-1zM39 41h1v1h-1zM38 39h1v1h-1zM20 24h1v1h-1zM52 24h1v1h-1zM44 34h1v1h-1zM63 12h1v1h-1zM30 33h1v1h-1zM31 45h1v1h-1zM2 49h1v1h-1zM12 21h1v1h-1zM3 26h1v1h-1zM16 0h1v1h-1zM5 12h1v1h-1zM60 26h1v1h-1zM10 25h1v1h-1zM40 63h1v1h-1zM30 28h1v1h-1zM55 7h1v1h-1zM56 35h1v1h-1zM42 45h1v1h-1zM14 60h1v1h-1zM2 17h1v1h-1zM46 32h1v1h-1zM32 14h1v1h-1zM24 61h1v1h-1zM20 37h1v1h-1zM30 47h1v1h-1zM27 54h1v1h-1zM9 36h1v1h-1zM25 24h1v1h-1zM36 2h1v1h-1zM55 37h1v1h-1z" fill="#a9b3a8" shape-rendering="crispEdges"/>
<path d="M3 115h1v1h-1zM21 84h1v1h-1zM37 90h1v1h-1zM59 105h1v1h-1zM71 101h1v1h-1zM24 109h1v1h-1zM24 86h1v1h-1zM8 98h1v1h-1zM43 109h1v1h-1zM53 102h1v1h-1zM56 92h1v1h-1zM14 116h1v1h-1zM49 110h1v1h-1zM26 84h1v1h-1zM7 113h1v1h-1zM73 91h1v1h-1zM13 100h1v1h-1zM14 101h1v1h-1zM14 107h1v1h-1zM46 92h1v1h-1zM46 87h1v1h-1zM55 113h1v1h-1zM19 75h1v1h-1zM8 95h1v1h-1zM16 75h1v1h-1zM4 102h1v1h-1zM20 70h1v1h-1zM13 96h1v1h-1zM13 104h1v1h-1zM20 83h1v1h-1zM71 94h1v1h-1zM24 84h1v1h-1zM85 109h1v1h-1zM42 68h1v1h-1zM10 112h1v1h-1zM5 94h1v1h-1zM66 94h1v1h-1zM37 96h1v1h-1zM8 110h1v1h-1zM22 89h1v1h-1zM42 103h1v1h-1zM29 103h1v1h-1zM38 83h1v1h-1zM0 96h1v1h-1zM42 97h1v1h-1zM18 82h1v1h-1zM26 113h1v1h-1zM7 82h1v1h-1zM14 111h1v1h-1zM21 76h1v1h-1zM36 103h1v1h-1zM47 109h1v1h-1zM7 109h1v1h-1zM49 101h1v1h-1zM30 104h1v1h-1zM40 104h1v1h-1zM19 115h1v1h-1zM29 101h1v1h-1zM14 84h1v1h-1zM8 88h1v1h-1zM59 94h1v1h-1zM39 85h1v1h-1zM44 90h1v1h-1zM55 96h1v1h-1zM49 115h1v1h-1zM20 92h1v1h-1zM28 105h1v1h-1zM24 113h1v1h-1zM52 109h1v1h-1zM11 87h1v1h-1zM25 84h1v1h-1zM17 88h1v1h-1zM52 80h1v1h-1zM39 96h1v1h-1zM18 100h1v1h-1zM47 90h1v1h-1zM45 88h1v1h-1zM55 95h1v1h-1zM52 77h1v1h-1zM71 105h1v1h-1zM9 99h1v1h-1zM21 75h1v1h-1zM22 90h1v1h-1zM10 83h1v1h-1zM51 101h1v1h-1zM32 90h1v1h-1zM61 106h1v1h-1zM5 98h1v1h-1zM4 98h1v1h-1zM3 66h1v1h-1zM21 100h1v1h-1zM40 71h1v1h-1zM10 97h1v1h-1zM50 110h1v1h-1zM29 106h1v1h-1zM37 111h1v1h-1zM26 101h1v1h-1zM25 110h1v1h-1zM11 116h1v1h-1zM53 73h1v1h-1zM59 68h1v1h-1zM23 70h1v1h-1zM15 103h1v1h-1zM80 117h1v1h-1zM40 107h1v1h-1zM31 93h1v1h-1zM47 85h1v1h-1zM31 91h1v1h-1zM43 82h1v1h-1zM40 117h1v1h-1zM19 84h1v1h-1zM7 103h1v1h-1zM33 106h1v1h-1zM56 102h1v1h-1zM33 114h1v1h-1zM58 110h1v1h-1zM19 104h1v1h-1zM15 116h1v1h-1zM47 80h1v1h-1zM59 108h1v1h-1zM59 71h1v1h-1zM19 69h1v1h-1zM45 102h1v1h-1zM6 88h1v1h-1zM28 104h1v1h-1zM9 89h1v1h-1zM14 91h1v1h-1zM38 107h1v1h-1zM1 74h1v1h-1zM16 69h1v1h-1zM32 93h1v1h-1zM22 116h1v1h-1zM9 69h1v1h-1zM48 86h1v1h-1zM21 89h1v1h-1zM22 85h1v1h-1zM23 110h1v1h-1zM21 74h1v1h-1zM42 114h1v1h-1zM73 117h1v1h-1zM31 96h1v1h-1zM16 70h1v1h-1zM18 84h1v1h-1zM15 75h1v1h-1zM46 84h1v1h-1zM4 82h1v1h-1zM33 103h1v1h-1zM56 96h1v1h-1zM15 77h1v1h-1zM38 95h1v1h-1zM39 90h1v1h-1zM61 98h1v1h-1zM14 115h1v1h-1zM59 106h1v1h-1zM40 102h1v1h-1zM11 78h1v1h-1zM33 82h1v1h-1zM1 115h1v1h-1zM50 93h1v1h-1zM1 116h1v1h-1zM45 95h1v1h-1zM18 87h1v1h-1zM24 112h1v1h-1zM4 95h1v1h-1zM24 98h1v1h-1zM24 74h1v1h-1zM56 67h1v1h-1zM39 104h1v1h-1zM14 82h1v1h-1zM21 77h1v1h-1zM17 110h1v1h-1zM36 77h1v1h-1zM52 100h1v1h-1zM6 110h1v1h-1zM30 113h1v1h-1zM41 70h1v1h-1zM50 108h1v1h-1zM52 108h1v1h-1zM42 88h1v1h-1zM37 77h1v1h-1zM47 97h1v1h-1zM13 70h1v1h-1zM67 112h1v1h-1zM37 108h1v1h-1zM4 110h1v1h-1zM27 117h1v1h-1zM67 85h1v1h-1zM8 100h1v1h-1zM31 101h1v1h-1zM60 80h1v1h-1zM72 117h1v1h-1zM48 104h1v1h-1zM58 75h1v1h-1zM41 99h1v1h-1zM60 103h1v1h-1zM13 90h1v1h-1zM19 94h1v1h-1zM4 108h1v1h-1zM16 96h1v1h-1zM9 101h1v1h-1zM95 107h1v1h-1zM60 101h1v1h-1zM34 79h1v1h-1zM48 95h1v1h-1zM68 105h1v1h-1zM10 95h1v1h-1zM2 95h1v1h-1zM12 104h1v1h-1zM44 97h1v1h-1zM3 74h1v1h-1zM17 104h1v1h-1zM17 100h1v1h-1zM12 73h1v1h-1zM13 82h1v1h-1zM37 83h1v1h-1zM33 98h1v1h-1zM6 80h1v1h-1zM32 95h1v1h-1zM42 109h1v1h-1zM49 89h1v1h-1zM87 90h1v1h-1zM25 103h1v1h-1z" fill="#e4e8e1" shape-rendering="crispEdges"/>
<path d="M10 82h1v1h-1zM58 95h1v1h-1zM52 69h1v1h-1zM39 115h1v1h-1zM46 109h1v1h-1zM23 76h1v1h-1zM26 112h1v1h-1zM34 69h1v1h-1zM15 72h1v1h-1zM20 85h1v1h-1zM36 79h1v1h-1zM6 116h1v1h-1zM3 112h1v1h-1zM42 105h1v1h-1zM59 84h1v1h-1zM22 102h1v1h-1zM5 105h1v1h-1zM5 109h1v1h-1zM13 103h1v1h-1zM30 93h1v1h-1zM1 107h1v1h-1zM38 81h1v1h-1zM9 105h1v1h-1zM50 78h1v1h-1zM9 86h1v1h-1zM9 74h1v1h-1zM49 88h1v1h-1zM40 84h1v1h-1zM2 110h1v1h-1zM19 107h1v1h-1zM24 94h1v1h-1zM27 101h1v1h-1zM55 84h1v1h-1zM24 104h1v1h-1zM46 88h1v1h-1zM23 98h1v1h-1zM54 83h1v1h-1zM38 111h1v1h-1zM22 95h1v1h-1zM23 84h1v1h-1zM23 97h1v1h-1zM40 89h1v1h-1zM46 85h1v1h-1zM14 100h1v1h-1zM0 81h1v1h-1zM17 67h1v1h-1zM2 112h1v1h-1zM38 98h1v1h-1zM51 84h1v1h-1zM39 116h1v1h-1zM42 71h1v1h-1zM26 116h1v1h-1zM4 106h1v1h-1zM3 99h1v1h-1zM55 102h1v1h-1zM29 100h1v1h-1zM23 103h1v1h-1zM37 92h1v1h-1zM18 97h1v1h-1zM2 107h1v1h-1zM28 84h1v1h-1zM3 69h1v1h-1zM23 82h1v1h-1zM68 96h1v1h-1zM71 83h1v1h-1zM39 117h1v1h-1zM29 86h1v1h-1zM11 67h1v1h-1zM21 110h1v1h-1zM50 95h1v1h-1zM57 94h1v1h-1zM52 92h1v1h-1zM5 76h1v1h-1zM61 95h1v1h-1zM2 85h1v1h-1zM20 115h1v1h-1zM19 80h1v1h-1zM19 99h1v1h-1zM1 94h1v1h-1zM33 101h1v1h-1zM44 116h1v1h-1zM28 101h1v1h-1zM35 89h1v1h-1zM26 108h1v1h-1zM5 73h1v1h-1zM41 94h1v1h-1zM40 80h1v1h-1zM12 112h1v1h-1zM45 90h1v1h-1zM8 77h1v1h-1zM33 94h1v1h-1zM7 110h1v1h-1zM27 97h1v1h-1zM67 107h1v1h-1zM48 87h1v1h-1zM23 83h1v1h-1zM46 80h1v1h-1zM84 107h1v1h-1zM2 108h1v1h-1zM70 108h1v1h-1zM4 99h1v1h-1zM67 68h1v1h-1zM10 105h1v1h-1zM51 92h1v1h-1zM26 99h1v1h-1zM2 115h1v1h-1zM58 93h1v1h-1zM32 89h1v1h-1zM41 113h1v1h-1zM29 66h1v1h-1zM32 99h1v1h-1zM3 81h1v1h-1zM76 90h1v1h-1zM21 72h1v1h-1zM44 70h1v1h-1zM64 75h1v1h-1zM33 104h1v1h-1zM16 83h1v1h-1zM27 98h1v1h-1zM26 90h1v1h-1zM60 68h1v1h-1zM11 105h1v1h-1zM73 78h1v1h-1zM20 117h1v1h-1zM13 117h1v1h-1zM55 99h1v1h-1zM52 87h1v1h-1zM20 116h1v1h-1zM19 92h1v1h-1zM87 108h1v1h-1zM28 108h1v1h-1zM3 102h1v1h-1zM22 99h1v1h-1zM5 84h1v1h-1zM63 93h1v1h-1zM54 95h1v1h-1zM62 100h1v1h-1zM42 76h1v1h-1zM33 79h1v1h-1zM13 106h1v1h-1zM10 86h1v1h-1zM31 92h1v1h-1zM0 91h1v1h-1zM21 86h1v1h-1zM12 81h1v1h-1zM7 69h1v1h-1zM25 86h1v1h-1zM30 96h1v1h-1zM6 109h1v1h-1zM110 111h1v1h-1zM48 102h1v1h-1zM3 105h1v1h-1zM25 115h1v1h-1zM14 69h1v1h-1zM62 103h1v1h-1zM48 90h1v1h-1zM69 90h1v1h-1zM49 105h1v1h-1zM72 98h1v1h-1zM32 109h1v1h-1zM7 94h1v1h-1zM3 98h1v1h-1zM51 105h1v1h-1zM28 89h1v1h-1zM33 109h1v1h-1zM23 106h1v1h-1zM14 102h1v1h-1zM18 93h1v1h-1zM63 111h1v1h-1zM7 84h1v1h-1zM13 102h1v1h-1zM53 82h1v1h-1zM42 83h1v1h-1zM16 91h1v1h-1zM91 99h1v1h-1zM34 89h1v1h-1zM30 71h1v1h-1zM40 95h1v1h-1zM20 91h1v1h-1zM2 67h1v1h-1zM11 110h1v1h-1zM65 107h1v1h-1zM14 93h1v1h-1zM31 89h1v1h-1zM32 102h1v1h-1zM72 101h1v1h-1zM43 112h1v1h-1zM38 103h1v1h-1zM45 108h1v1h-1zM36 107h1v1h-1zM70 97h1v1h-1zM57 106h1v1h-1zM62 77h1v1h-1zM28 95h1v1h-1zM31 107h1v1h-1zM26 93h1v1h-1zM22 80h1v1h-1zM41 87h1v1h-1zM3 77h1v1h-1zM31 95h1v1h-1zM27 68h1v1h-1zM26 71h1v1h-1zM41 88h1v1h-1zM12 91h1v1h-1zM35 78h1v1h-1zM42 104h1v1h-1zM31 116h1v1h-1zM36 85h1v1h-1zM22 115h1v1h-1zM22 117h1v1h-1zM41 103h1v1h-1zM13 110h1v1h-1zM45 110h1v1h-1zM46 95h1v1h-1zM70 76h1v1h-1zM46 111h1v1h-1zM41 111h1v1h-1zM20 114h1v1h-1zM48 105h1v1h-1zM37 105h1v1h-1zM8 103h1v1h-1zM8 114h1v1h-1zM58 96h1v1h-1zM17 108h1v1h-1zM35 94h1v1h-1zM6 103h1v1h-1zM21 81h1v1h-1zM50 112h1v1h-1zM15 107h1v1h-1zM31 110h1v1h-1zM6 98h1v1h-1zM57 110h1v1h-1zM9 108h1v1h-1zM39 74h1v1h-1zM8 85h1v1h-1zM22 96h1v1h-1zM39 93h1v1h-1zM7 80h1v1h-1zM17 113h1v1h-1zM21 68h1v1h-1zM23 107h1v1h-1zM23 100h1v1h-1zM53 72h1v1h-1zM50 74h1v1h-1zM16 98h1v1h-1zM42 67h1v1h-1zM52 112h1v1h-1zM26 104h1v1h-1zM32 91h1v1h-1zM31 73h1v1h-1zM9 70h1v1h-1zM5 79h1v1h-1zM13 111h1v1h-1zM50 103h1v1h-1zM53 84h1v1h-1zM21 115h1v1h-1zM31 86h1v1h-1zM63 72h1v1h-1zM14 80h1v1h-1zM29 77h1v1h-1zM9 93h1v1h-1zM8 115h1v1h-1zM86 80h1v1h-1zM45 116h1v1h-1zM19 93h1v1h-1zM37 112h1v1h-1zM8 111h1v1h-1zM34 97h1v1h-1zM34 98h1v1h-1zM30 83h1v1h-1zM12 75h1v1h-1zM8 90h1v1h-1zM60 98h1v1h-1zM41 105h1v1h-1zM7 81h1v1h-1zM42 80h1v1h-1zM25 108h1v1h-1zM38 67h1v1h-1zM30 78h1v1h-1zM41 114h1v1h-1zM50 100h1v1h-1zM10 101h1v1h-1zM19 74h1v1h-1zM59 93h1v1h-1zM35 116h1v1h-1zM59 80h1v1h-1zM48 91h1v1h-1zM47 87h1v1h-1zM45 104h1v1h-1zM17 79h1v1h-1zM3 79h1v1h-1zM17 98h1v1h-1zM56 85h1v1h-1zM60 85h1v1h-1zM36 78h1v1h-1zM35 68h1v1h-1zM36 90h1v1h-1zM2 88h1v1h-1zM22 114h1v1h-1zM2 94h1v1h-1zM47 95h1v1h-1zM79 93h1v1h-1zM12 109h1v1h-1zM21 104h1v1h-1zM45 112h1v1h-1zM24 99h1v1h-1zM43 101h1v1h-1zM0 89h1v1h-1zM38 117h1v1h-1zM5 114h1v1h-1zM35 111h1v1h-1zM24 78h1v1h-1zM43 108h1v1h-1zM34 111h1v1h-1zM11 111h1v1h-1zM12 96h1v1h-1zM35 79h1v1h-1zM30 89h1v1h-1zM78 109h1v1h-1zM42 78h1v1h-1zM34 110h1v1h-1zM36 91h1v1h-1zM24 102h1v1h-1zM14 114h1v1h-1zM12 113h1v1h-1zM49 109h1v1h-1zM41 86h1v1h-1zM10 96h1v1h-1zM17 102h1v1h-1zM37 98h1v1h-1zM31 94h1v1h-1zM30 75h1v1h-1zM5 86h1v1h-1zM14 88h1v1h-1zM51 117h1v1h-1zM27 107h1v1h-1zM51 97h1v1h-1zM11 93h1v1h-1zM20 103h1v1h-1zM38 68h1v1h-1zM22 87h1v1h-1zM76 71h1v1h-1zM27 87h1v1h-1zM8 75h1v1h-1zM66 76h1v1h-1zM25 97h1v1h-1zM5 74h1v1h-1zM40 88h1v1h-1zM40 90h1v1h-1zM10 84h1v1h-1zM26 74h1v1h-1zM48 96h1v1h-1zM3 83h1v1h-1zM43 117h1v1h-1zM26 107h1v1h-1zM33 69h1v1h-1zM27 83h1v1h-1zM27 109h1v1h-1zM20 72h1v1h-1zM33 91h1v1h-1zM13 89h1v1h-1zM0 97h1v1h-1zM53 83h1v1h-1zM15 97h1v1h-1zM32 80h1v1h-1zM4 86h1v1h-1zM22 74h1v1h-1zM48 69h1v1h-1zM27 100h1v1h-1zM9 72h1v1h-1zM37 93h1v1h-1zM0 94h1v1h-1zM1 78h1v1h-1zM6 101h1v1h-1zM69 116h1v1h-1zM16 107h1v1h-1zM37 107h1v1h-1zM5 68h1v1h-1zM50 96h1v1h-1zM25 75h1v1h-1zM5 102h1v1h-1zM48 75h1v1h-1zM64 85h1v1h-1zM52 81h1v1h-1zM30 110h1v1h-1zM49 95h1v1h-1zM4 88h1v1h-1zM5 115h1v1h-1zM5 77h1v1h-1zM24 103h1v1h-1zM2 98h1v1h-1zM30 107h1v1h-1zM45 114h1v1h-1zM12 111h1v1h-1zM27 103h1v1h-1zM5 81h1v1h-1zM50 113h1v1h-1zM15 82h1v1h-1zM28 103h1v1h-1zM31 90h1v1h-1zM79 83h1v1h-1zM64 92h1v1h-1zM3 100h1v1h-1zM0 83h1v1h-1zM82 98h1v1h-1zM74 84h1v1h-1zM5 117h1v1h-1zM31 113h1v1h-1zM47 100h1v1h-1zM43 76h1v1h-1zM22 98h1v1h-1zM5 88h1v1h-1zM24 77h1v1h-1zM60 97h1v1h-1zM3 88h1v1h-1zM20 97h1v1h-1zM15 84h1v1h-1zM28 96h1v1h-1zM51 82h1v1h-1zM21 108h1v1h-1zM18 95h1v1h-1zM12 98h1v1h-1zM68 74h1v1h-1zM25 67h1v1h-1zM16 97h1v1h-1zM10 72h1v1h-1zM60 116h1v1h-1zM45 100h1v1h-1zM14 110h1v1h-1zM40 91h1v1h-1zM15 91h1v1h-1zM38 92h1v1h-1zM6 78h1v1h-1zM32 94h1v1h-1zM20 110h1v1h-1zM39 108h1v1h-1zM8 99h1v1h-1zM2 105h1v1h-1zM27 93h1v1h-1zM61 100h1v1h-1zM31 79h1v1h-1zM27 81h1v1h-1zM39 101h1v1h-1zM60 87h1v1h-1zM14 83h1v1h-1zM39 67h1v1h-1zM46 76h1v1h-1zM34 82h1v1h-1zM23 109h1v1h-1zM30 103h1v1h-1zM65 94h1v1h-1zM74 102h1v1h-1zM38 105h1v1h-1zM46 75h1v1h-1zM18 105h1v1h-1zM52 98h1v1h-1zM23 104h1v1h-1zM0 90h1v1h-1zM39 92h1v1h-1zM1 87h1v1h-1zM51 103h1v1h-1zM38 102h1v1h-1zM41 83h1v1h-1zM17 96h1v1h-1zM28 97h1v1h-1zM72 116h1v1h-1zM23 102h1v1h-1zM25 101h1v1h-1zM3 96h1v1h-1zM32 106h1v1h-1zM16 93h1v1h-1zM41 81h1v1h-1zM7 66h1v1h-1zM21 85h1v1h-1zM3 82h1v1h-1zM36 102h1v1h-1zM16 80h1v1h-1zM48 79h1v1h-1zM1 82h1v1h-1zM27 88h1v1h-1zM73 85h1v1h-1zM86 95h1v1h-1zM54 96h1v1h-1zM40 96h1v1h-1zM79 91h1v1h-1zM20 100h1v1h-1zM12 77h1v1h-1zM32 92h1v1h-1zM24 85h1v1h-1zM9 95h1v1h-1zM34 113h1v1h-1zM25 91h1v1h-1zM17 91h1v1h-1zM42 89h1v1h-1zM7 87h1v1h-1zM24 87h1v1h-1zM52 113h1v1h-1zM63 99h1v1h-1zM57 99h1v1h-1zM0 100h1v1h-1zM9 107h1v1h-1zM26 83h1v1h-1zM35 115h1v1h-1zM40 94h1v1h-1zM68 107h1v1h-1zM28 76h1v1h-1zM12 69h1v1h-1zM45 93h1v1h-1zM46 90h1v1h-1zM30 106h1v1h-1zM46 116h1v1h-1zM82 86h1v1h-1zM4 79h1v1h-1zM20 90h1v1h-1zM10 81h1v1h-1zM12 86h1v1h-1zM45 82h1v1h-1zM45 96h1v1h-1zM20 106h1v1h-1zM47 86h1v1h-1z" fill="#7b8678" shape-rendering="crispEdges"/>
<path d="M11 139h1v1h-1zM14 146h1v1h-1zM3 148h1v1h-1zM9 124h1v1h-1zM38 136h1v1h-1zM45 156h1v1h-1zM14 129h1v1h-1zM45 118h1v1h-1zM4 156h1v1h-1zM19 124h1v1h-1zM44 132h1v1h-1zM12 142h1v1h-1zM9 157h1v1h-1zM28 132h1v1h-1zM5 137h1v1h-1zM30 153h1v1h-1zM22 129h1v1h-1zM12 153h1v1h-1zM3 120h1v1h-1zM8 147h1v1h-1zM15 128h1v1h-1zM16 124h1v1h-1zM4 158h1v1h-1zM75 126h1v1h-1zM4 149h1v1h-1zM42 120h1v1h-1zM19 123h1v1h-1zM71 128h1v1h-1zM19 140h1v1h-1zM30 149h1v1h-1zM41 123h1v1h-1zM25 140h1v1h-1zM31 154h1v1h-1zM36 145h1v1h-1zM0 151h1v1h-1zM101 120h1v1h-1zM5 153h1v1h-1zM9 147h1v1h-1zM34 158h1v1h-1zM3 133h1v1h-1zM20 120h1v1h-1zM3 146h1v1h-1zM19 163h1v1h-1zM47 122h1v1h-1zM7 138h1v1h-1zM30 128h1v1h-1zM53 123h1v1h-1zM8 124h1v1h-1zM41 120h1v1h-1zM23 123h1v1h-1zM39 148h1v1h-1zM27 128h1v1h-1zM29 136h1v1h-1zM38 129h1v1h-1zM38 159h1v1h-1zM31 157h1v1h-1zM68 119h1v1h-1zM1 128h1v1h-1zM68 131h1v1h-1zM45 122h1v1h-1zM38 122h1v1h-1zM24 120h1v1h-1zM21 148h1v1h-1zM23 132h1v1h-1zM61 133h1v1h-1zM11 144h1v1h-1zM35 136h1v1h-1zM23 140h1v1h-1zM18 126h1v1h-1zM26 151h1v1h-1zM13 128h1v1h-1zM39 161h1v1h-1zM55 125h1v1h-1zM49 122h1v1h-1zM4 162h1v1h-1zM44 133h1v1h-1zM34 121h1v1h-1zM80 122h1v1h-1zM24 130h1v1h-1zM12 148h1v1h-1zM28 142h1v1h-1zM40 125h1v1h-1zM28 119h1v1h-1zM9 142h1v1h-1zM30 133h1v1h-1zM46 146h1v1h-1zM55 122h1v1h-1zM21 156h1v1h-1zM5 159h1v1h-1zM24 160h1v1h-1zM11 146h1v1h-1zM36 162h1v1h-1zM35 118h1v1h-1zM28 118h1v1h-1zM20 157h1v1h-1zM68 124h1v1h-1zM13 132h1v1h-1zM73 133h1v1h-1zM41 164h1v1h-1zM24 121h1v1h-1zM23 139h1v1h-1zM3 144h1v1h-1zM31 128h1v1h-1zM17 120h1v1h-1zM15 156h1v1h-1zM23 135h1v1h-1zM47 119h1v1h-1zM29 125h1v1h-1zM5 125h1v1h-1zM7 151h1v1h-1zM28 145h1v1h-1zM74 135h1v1h-1zM34 134h1v1h-1zM34 125h1v1h-1zM19 121h1v1h-1zM31 125h1v1h-1zM9 152h1v1h-1zM28 138h1v1h-1zM1 126h1v1h-1zM85 118h1v1h-1zM6 139h1v1h-1zM29 162h1v1h-1zM17 145h1v1h-1zM10 120h1v1h-1zM4 157h1v1h-1zM2 137h1v1h-1zM7 134h1v1h-1zM28 120h1v1h-1zM31 120h1v1h-1zM7 152h1v1h-1zM33 125h1v1h-1zM40 128h1v1h-1zM46 159h1v1h-1zM56 123h1v1h-1zM41 119h1v1h-1zM5 142h1v1h-1zM33 139h1v1h-1zM40 154h1v1h-1zM27 133h1v1h-1zM64 118h1v1h-1zM11 156h1v1h-1zM37 136h1v1h-1zM5 147h1v1h-1zM20 139h1v1h-1zM60 131h1v1h-1zM20 156h1v1h-1zM38 152h1v1h-1zM21 140h1v1h-1zM1 151h1v1h-1zM42 118h1v1h-1zM22 121h1v1h-1zM33 119h1v1h-1zM24 154h1v1h-1zM45 140h1v1h-1zM5 121h1v1h-1zM17 140h1v1h-1zM4 121h1v1h-1zM30 141h1v1h-1zM15 149h1v1h-1zM40 143h1v1h-1zM57 137h1v1h-1zM11 141h1v1h-1zM27 158h1v1h-1zM18 149h1v1h-1zM67 119h1v1h-1zM14 136h1v1h-1zM21 120h1v1h-1zM25 160h1v1h-1zM14 150h1v1h-1zM18 148h1v1h-1zM12 122h1v1h-1zM7 147h1v1h-1zM7 130h1v1h-1zM24 156h1v1h-1zM9 145h1v1h-1zM27 122h1v1h-1zM22 138h1v1h-1zM30 131h1v1h-1zM76 118h1v1h-1zM60 125h1v1h-1zM31 132h1v1h-1zM6 125h1v1h-1zM11 152h1v1h-1zM15 127h1v1h-1zM31 145h1v1h-1zM20 149h1v1h-1zM1 134h1v1h-1zM49 126h1v1h-1zM9 146h1v1h-1zM36 124h1v1h-1zM33 156h1v1h-1zM32 124h1v1h-1zM22 120h1v1h-1zM26 158h1v1h-1zM9 139h1v1h-1zM33 150h1v1h-1zM26 125h1v1h-1zM7 121h1v1h-1zM12 135h1v1h-1zM26 141h1v1h-1zM7 120h1v1h-1zM28 128h1v1h-1zM25 164h1v1h-1zM6 158h1v1h-1zM23 131h1v1h-1zM19 146h1v1h-1zM4 136h1v1h-1zM24 155h1v1h-1zM7 155h1v1h-1zM39 142h1v1h-1zM13 163h1v1h-1zM28 146h1v1h-1zM23 159h1v1h-1zM39 122h1v1h-1zM20 151h1v1h-1zM19 119h1v1h-1zM0 124h1v1h-1zM7 150h1v1h-1zM41 127h1v1h-1z" fill="#5d6759" shape-rendering="crispEdges" opacity="0.800"/>
<path d="M45.2 213 V196.400 Q45.2 190.900 50.7 190.900 H131.5 Q137 190.900 137 196.400 V213 Z" fill="#5b5d5c"/>
<path d="M151.2 213 V196.400 Q151.2 190.900 156.7 190.900 H175.6 Q181.1 190.900 181.1 196.400 V213 Z" fill="#5b5d5c"/>
<path d="M195.2 213 V196.400 Q195.2 190.900 200.7 190.900 H250.4 Q255.9 190.900 255.9 196.400 V213 Z" fill="#5b5d5c"/>
<path d="M270 213 V196.400 Q270 190.900 275.5 190.900 H294.5 Q300 190.900 300 196.400 V213 Z" fill="#5b5d5c"/>
<g stroke="#a9abaa" stroke-width="1"><line x1="75.400" y1="194.400" x2="75.400" y2="209.700"/><line x1="106.400" y1="194.400" x2="106.400" y2="209.700"/><line x1="225.300" y1="194.400" x2="225.300" y2="209.700"/></g>
<g fill="none" stroke="#fff" stroke-width="1.200" stroke-linejoin="round"><circle cx="59.400" cy="198.700" r="3.600"/><path d="M53 208.600 C53 204.500 55.500 203.300 57.500 202.800 L59.400 205.500 L61.300 202.800 C63.300 203.300 65.800 204.500 65.800 208.600 Z"/></g>
<path d="M53.500 208.900 H65.300" stroke="#e39a5c" stroke-width="0.800" opacity="0.9"/>
<g fill="none" stroke="#2f9fd0" stroke-width="1" stroke-linejoin="round"><path d="M84.600 200.400 L91 196.600 L98.800 197.800 L98.800 204.400 L92.400 208.200 L84.600 206.600 Z"/><path d="M84.600 200.400 L92.400 201.800 L98.800 197.800 M92.400 201.800 V208.200"/></g>
<path d="M88.500 203.600 h2.400 M89.700 202.400 v2.400" stroke="#2f9fd0" stroke-width="0.800"/>
<g fill="none" stroke="#fff" stroke-width="1.200"><path d="M115.800 195.800 H128.200 V201 H121.600 V208.600 H115.800 Z"/><path d="M118.400 195.800 V208.600 M118.400 198.400 H128.200"/></g>
<g fill="none" stroke="#fff" stroke-width="1.200"><rect x="158.800" y="196" width="8" height="12.400" rx="4"/><path d="M162.800 196 V201.200 M158.800 201.200 H166.800"/></g>
<path d="M158.900 201 V199.500 Q159.200 196.300 162.600 196.100 V201 Z" fill="#fff"/>
<path d="M172 196 l2.300 3.200 h-4.600 z M172 208.600 l2.300 -3.200 h-4.600 z" fill="#fff"/><path d="M172 198.500 V206" stroke="#fff" stroke-width="1.100"/>
<g fill="none" stroke="#fff" stroke-width="1.500" stroke-linecap="round"><circle cx="208.6" cy="200.600" r="4.300"/><path d="M211.9 204 L216 208.600" stroke-width="2"/></g>
<path d="M206.4 200.600 h4.400" stroke="#fff" stroke-width="1.300"/>
<path d="M208.6 198.400 v4.400" stroke="#fff" stroke-width="1.300"/>
<g fill="none" stroke="#fff" stroke-width="1.500" stroke-linecap="round"><circle cx="239.2" cy="200.600" r="4.300"/><path d="M242.5 204 L246.6 208.600" stroke-width="2"/></g>
<path d="M237 200.600 h4.400" stroke="#fff" stroke-width="1.300"/>
<g fill="none" stroke="#fff" stroke-width="1.200"><rect x="279.600" y="195.200" width="10.600" height="13.800" rx="5.300"/><path d="M284.900 195.200 V200.800 M279.600 200.800 H290.200" stroke-width="0.900"/></g>
</svg></div>
<div id="panel">
<div id="ptab"><svg width="26" height="22" viewBox="0 0 26 22"><g fill="none" stroke="#fff" stroke-width="1.100" stroke-linejoin="round"><path d="M7.200 2.700 H17.400 L22.600 17.800 H1.800 Z"/><path d="M1.800 17.800 H22.600" stroke="#f1c9b0"/><path d="M3.300 17.800 V19.800 M21.100 17.800 V19.800"/><path d="M7.800 14.800 V8.800 L12.200 5.200 L16.600 8.800 V14.800 Z"/><path d="M9.800 14.500 V9.800 H14.600 V14.500 M12.200 9.800 V14.500 M9.800 12.100 H14.600" stroke-width="0.800"/><path d="M6.200 1 H8.200 V2.700" stroke-width="0.900"/></g></svg><span>Dormer</span></div>
<div id="pbody">
<div id="ptitle">Gable roof dormer</div>
<div class="sbtn" style="left:10px;background:#13aaa3"><svg width="30" height="21" viewBox="0 0 30 21"><g fill="none" stroke="#fff" stroke-width="1.100"><rect x="10.900" y="4.100" width="11.400" height="10.600" rx="1"/><path d="M8.700 6.300 V16.800 H20"/><path d="M16.600 6.300 V12.500 M13.500 9.400 H19.700"/></g></svg></div>
<div class="sbtn" style="left:240px;background:#ea5248"><svg width="30" height="21" viewBox="0 0 30 21"><g fill="none" stroke="#fff" stroke-width="1.800" stroke-linejoin="round"><path d="M11.500 7.300 L12.300 15.200 Q12.400 16.200 13.400 16.200 H16.600 Q17.600 16.200 17.700 15.200 L18.500 7.300"/><path d="M10 5.800 H20" stroke-width="1.700"/><path d="M13.300 4.300 H16.700" stroke-width="1.400"/></g></svg></div>
<div id="thumb"><svg width="84" height="90" viewBox="0 0 84 90" style="display:block">
<defs><linearGradient id="tsky" x1="0" y1="0" x2="0" y2="1"><stop offset="0" stop-color="#5a9fd2"/><stop offset="1" stop-color="#a5cbe4"/></linearGradient>
<linearGradient id="tgl" x1="0" y1="0" x2="0" y2="1"><stop offset="0" stop-color="#aab4b8"/><stop offset="0.55" stop-color="#d8dee0"/><stop offset="1" stop-color="#98a2a6"/></linearGradient>
<filter id="tb"><feGaussianBlur stdDeviation="1.100"/></filter></defs>
<rect width="84" height="90" fill="url(#tsky)"/>
<g filter="url(#tb)" fill="#fff"><ellipse cx="9" cy="6" rx="8" ry="4.500"/><ellipse cx="30" cy="7" rx="6" ry="4"/><ellipse cx="45" cy="4" rx="7" ry="3.500"/><ellipse cx="50" cy="11" rx="5" ry="2.500"/><ellipse cx="5" cy="13" rx="4" ry="2"/><ellipse cx="77" cy="1" rx="5" ry="1.500"/></g>
<polygon points="0,26.500 84,6 84,90 0,90" fill="#76756f"/>
<polygon points="0,26.500 30,19 0,60" fill="#6d6c67"/>
<g stroke="#62615c" stroke-width="0.600" opacity="0.800"><path d="M0 40 L84 16 M0 52 L84 30 M0 66 L84 46 M0 80 L84 64 M20 90 L84 80 M60 20 L84 28 M50 30 L84 42"/></g>
<polygon points="35,11.300 15.300,39.900 15.300,74.400 62.500,83.300 62.500,39.900" fill="#e3e8ea"/>
<polygon points="15.300,39.900 35,24 50,36 50,70 22,74 15.300,74.400" fill="#eef1f2" opacity="0.600"/>
<polygon points="62.500,39.900 77.800,43.500 77.800,77 62.500,83.300" fill="#c9d0d3"/>
<polygon points="73,44 78.300,43.600 78.300,78.500 64,83" fill="#272b2c"/>
<polygon points="34,7.700 11.400,41.800 15.300,42.400 35.500,12.500" fill="#2f3233"/>
<polygon points="34,7.700 78.500,41.200 77,44 62.500,40.800 35.500,12.500" fill="#3a3d3e"/>
<polygon points="35.500,12.500 62.500,40.800 62.500,39 36,10.800" fill="#d9dfe2"/>
<polygon points="23,39.300 49.800,38.600 49.800,73.700 23,73.700" fill="#c4ccd0"/>
<polygon points="28,42.800 49.200,42 49.200,72.300 28,72.300" fill="url(#tgl)"/>
<polygon points="28,72.300 49.200,72.300 49.800,73.700 23,73.700" fill="#f0f3f4"/>
</svg></div>
<div id="itab"><svg width="20" height="20" viewBox="0 0 20 20"><circle cx="10" cy="10" r="8.300" fill="none" stroke="#fff" stroke-width="1.300"/><rect x="9.100" y="8.300" width="1.800" height="6.400" fill="#fff"/><circle cx="10" cy="5.800" r="1.150" fill="#fff"/></svg></div>
<div id="ibody"><h3>Dimensions</h3>
<div class="fld" style="top:54.2px"><i style="background:#7d8f6c"></i><label style="letter-spacing:0.07px">Height</label><b style="letter-spacing:0.23px">3'-11 1/4&quot;</b><u></u><s class="up"></s><s class="dn"></s></div>
<div class="fld" style="top:105.3px"><i style="background:#3b9bd3"></i><label style="letter-spacing:0.38px">Width</label><b style="letter-spacing:0.23px">4'-11 3/4&quot;</b><u></u><s class="up"></s><s class="dn"></s></div>
<div class="fld" style="top:173.8px"><i style="background:#3eb9c1"></i><label style="letter-spacing:-0.34px">Side thickness</label><b style="letter-spacing:0.00px">6 1/4&quot;</b><u></u><s class="up"></s><s class="dn"></s></div>
<div class="fld" style="top:225.1px"><i style="background:#efe612"></i><label style="letter-spacing:-0.10px">Front thickness</label><b style="letter-spacing:0.00px">6 1/4&quot;</b><u></u><s class="up"></s><s class="dn"></s></div>
<div class="fld" style="top:287.5px"><i style="background:#e2883b"></i><label style="letter-spacing:-0.31px">Angle (°)</label><b style="letter-spacing:0.50px">34</b><u></u><s class="up"></s><s class="dn"></s></div>
<div class="fld" style="top:338.6px"><i style="background:#e2883b"></i><label style="letter-spacing:-0.62px">Slope (%)</label><b style="letter-spacing:0.20px">67</b><u></u><s class="up"></s><s class="dn"></s></div>
<div class="fld" style="top:389.6px"><i style="background:#f6c7c5"></i><label style="letter-spacing:-0.12px">Overhang</label><b style="letter-spacing:-0.30px">4&quot;</b><u></u><s class="up"></s><s class="dn"></s></div>
</div>
</div>
</div>
<div style="position:absolute;left:1000px;top:405px;width:147px;height:400px;overflow:hidden"><svg width="150" height="400" viewBox="1000 405 150 400" style="display:block">
<g fill="none" stroke="#dedede" stroke-width="1.250" stroke-linejoin="miter">
<path d="M1014.800 454 L1063.400 414.500 L1112.700 454 Z"/>
<path d="M1026.100 454 V505 M1101.500 454 V505"/>
<rect x="1039.700" y="466.100" width="48.600" height="30.900"/>
<rect x="1041.700" y="468.100" width="21" height="26.900" stroke-width="1.100"/><rect x="1065.300" y="468.100" width="21" height="26.900" stroke-width="1.100"/>
<path d="M1063.300 531 L1023 567 V632.900 H1104.700 V567 Z"/>
<path d="M1063.300 531 V632.900" stroke-width="1.200"/>
<path d="M1014.600 715.400 L1063.300 675.500 L1112.300 715.400 Z"/>
<path d="M1025.600 715.400 V765.600 M1101.700 715.400 V765.600"/>
<rect x="1040" y="727.600" width="48" height="31.500"/>
<rect x="1042" y="729.600" width="20.700" height="27.500" stroke-width="1.100"/><rect x="1065.300" y="729.600" width="20.700" height="27.500" stroke-width="1.100"/>
</g>
<path d="M1020.500 457.500 V503" stroke="#7d8f6c" stroke-width="1.200"/><path d="M1020.500 455.800 l1.800 2.800 h-3.600 z M1020.500 504.700 l1.800 -2.800 h-3.600 z" fill="#7d8f6c"/>
<path d="M1028 507.600 H1099" stroke="#3b9bd3" stroke-width="1.500"/><circle cx="1027.600" cy="507.600" r="1.800" fill="#3b9bd3"/><circle cx="1099.400" cy="507.600" r="1.800" fill="#3b9bd3"/>
<rect x="1027.900" y="562.500" width="9.500" height="56" fill="#45b8bf"/><rect x="1090.300" y="562.500" width="8.700" height="56" fill="#45b8bf"/>
<rect x="1027.900" y="618.400" width="71.100" height="8.800" fill="#efe612"/>
<g fill="none" stroke="#e2883b" stroke-width="1"><path d="M1032 701 Q1038.500 705 1038.800 715"/><path d="M1034.300 699.500 Q1041 704 1041.300 715" stroke-dasharray="2 1.200"/></g>
<path d="M1016.300 718.400 H1023" stroke="#f0b9b6" stroke-width="1"/><path d="M1015 718.400 l2.400 -1.800 v3.600 z M1024.300 718.400 l-2.400 -1.800 v3.600 z" fill="#f0b9b6"/>
</svg></div>
<svg id="cursor" width="14" height="21" viewBox="0 0 14 21"><path d="M1 1 V16.200 L4.600 12.900 L7.300 19.200 L9.700 18.200 L7 12 L11.800 11.800 Z" fill="#fff" stroke="#111" stroke-width="1.100" stroke-linejoin="round"/></svg>
</div></body></html>
